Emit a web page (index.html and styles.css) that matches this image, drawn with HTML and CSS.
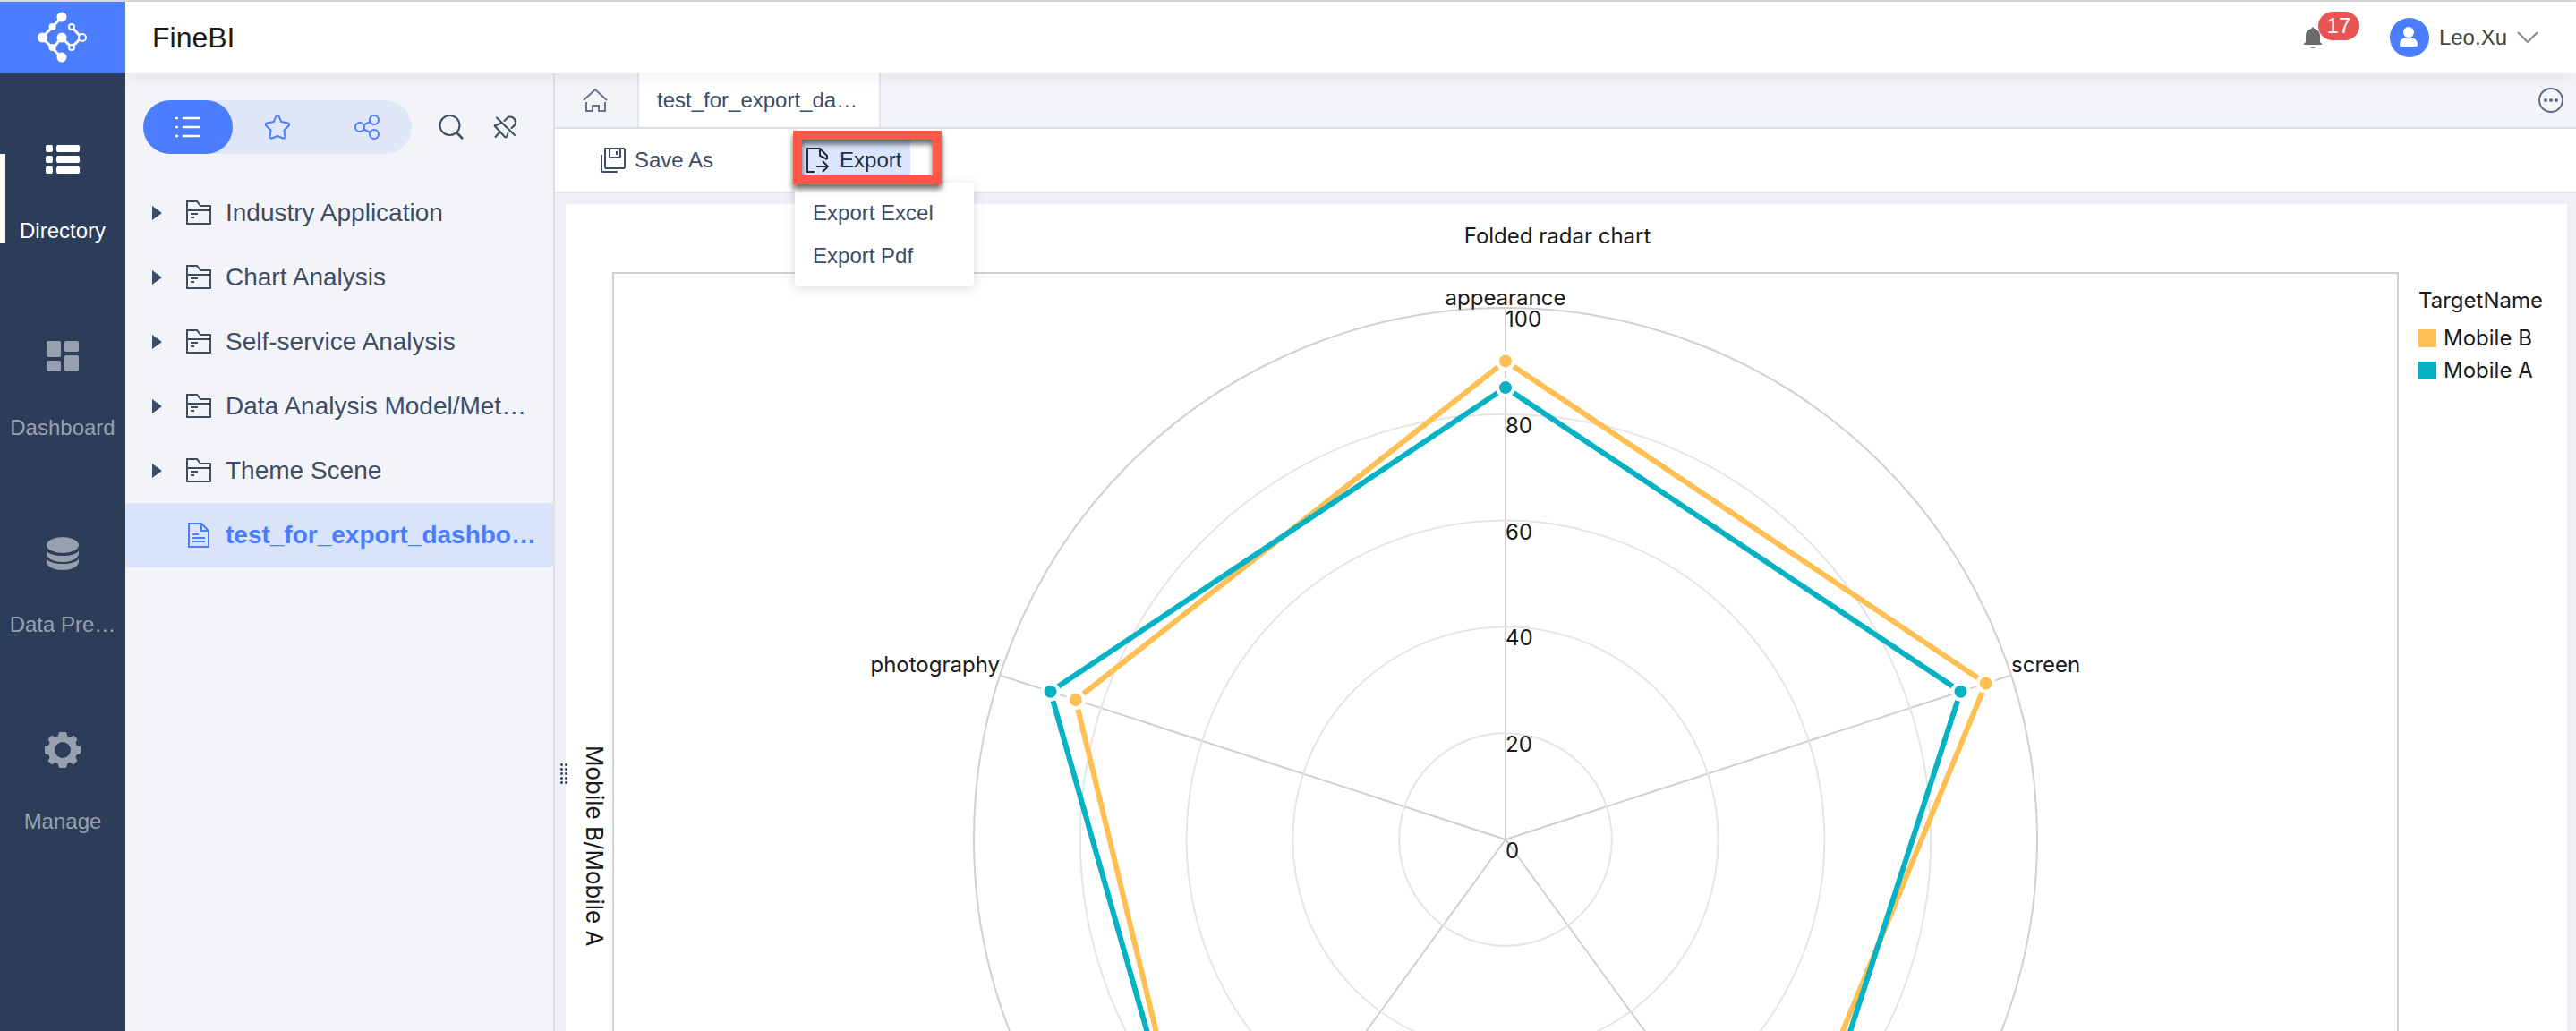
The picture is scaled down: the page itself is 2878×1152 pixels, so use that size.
FILE: index.html
```html
<!DOCTYPE html>
<html lang="en">
<head>
    <meta charset="UTF-8">
    <meta name="viewport" content="width=device-width, initial-scale=1.0">
    <title>FineBI</title>
    <link rel="stylesheet" href="styles.css">
</head>
<body>
    <div class="app">
        <nav class="sidebar">
            <a class="logo" href="#" aria-label="FineBI home">
                <svg width="56" height="60" viewBox="0 0 56 60">
                    <g fill="none" stroke="#fff" stroke-width="3">
                        <path d="M27 7 17 18 5 30 17 42 27 53M17 42 27 30 38 41 49 30 38 18"/>
                        <g fill="#4a7dff" stroke-width="2">
                            <circle cx="38" cy="18" r="3"/>
                            <circle cx="50" cy="30" r="4"/>
                            <circle cx="38" cy="41" r="3"/>
                        </g>
                    </g>
                    <g fill="#fff">
                        <circle cx="27" cy="7" r="5.5"/>
                        <circle cx="16.500" cy="18" r="4"/>
                        <circle cx="5.500" cy="30" r="5.500"/>
                        <circle cx="27" cy="30" r="5.500"/>
                        <circle cx="16.500" cy="41" r="4"/>
                        <circle cx="27" cy="52" r="5.500"/>
                    </g>
                </svg>
            </a>
            <div class="nav-list">
                <a class="nav-item active" href="#">
                    <svg width="40" height="40" viewBox="0 0 40 40" fill="currentColor">
                        <rect x="1" y="4" width="8" height="8" rx="2"/><rect x="13" y="4" width="26" height="8" rx="2"/>
                        <rect x="1" y="16" width="8" height="8" rx="2"/><rect x="13" y="16" width="26" height="8" rx="2"/>
                        <rect x="1" y="28" width="8" height="8" rx="2"/><rect x="13" y="28" width="26" height="8" rx="2"/>
                    </svg>
                    <span>Directory</span>
                </a>
                <a class="nav-item" href="#">
                    <svg width="40" height="40" viewBox="0 0 40 40" fill="currentColor">
                        <rect x="2" y="3" width="16" height="18" rx="2"/><rect x="22" y="3" width="16" height="12" rx="2"/>
                        <rect x="2" y="25" width="16" height="12" rx="2"/><rect x="22" y="19" width="16" height="18" rx="2"/>
                    </svg>
                    <span>Dashboard</span>
                </a>
                <a class="nav-item" href="#">
                    <svg width="40" height="40" viewBox="0 0 40 40" fill="currentColor">
                        <ellipse cx="20" cy="11" rx="18" ry="9"/>
                        <path d="M2 17c3 8 33 8 36 0v4c-2 12-34 12-36 0z"/>
                        <path d="M2 26c3 8 33 8 36 0v4c-2 12-34 12-36 0z"/>
                    </svg>
                    <span>Data Pre…</span>
                </a>
                <a class="nav-item" href="#">
                    <svg width="40" height="40" viewBox="-20 -20 40 40" fill="currentColor">
                        <path fill-rule="evenodd" d="M-4-20H4L5.500-15 8.500-13.800 12-16.500 16.500-12 14.500-8.500 15.500-5.500 20-4V4L15.500 5.500 14.500 8.500 16.500 12 12 16.500 8.500 13.800 5.500 15 4 20H-4L-5.500 15-8.500 13.800-12 16.500-16.500 12-14.500 8.500-15.500 5.500-20 4V-4L-15.500-5.500-14.500-8.500-16.500-12-12-16.500-8.500-13.800-5.500-15zM9 0A9 9 0 1 0-9 0 9 9 0 1 0 9 0z"/>
                    </svg>
                    <span>Manage</span>
                </a>
            </div>
        </nav>

        <div class="page">
            <header class="header">
                <h1>FineBI</h1>
                <div class="user-area">
                    <button class="icon-button bell" aria-label="Messages">
                        <svg width="20" height="26" viewBox="0 0 20 26" fill="#6b6b6b">
                            <path d="M8.500 3a1.500 1.500 0 0 1 3 0c4 1 6.500 4 6.500 8v7l2 2v1H0v-1l2-2v-7c0-4 2.500-7 6.500-8zM6.500 23h7c-1 2.500-6 2.500-7 0z"/>
                        </svg>
                        <span class="badge">17</span>
                    </button>
                    <button class="user">
                        <svg width="44" height="44" viewBox="0 0 44 44">
                            <circle cx="22" cy="22" r="22" fill="#4a7dff"/>
                            <circle cx="21" cy="16" r="6" fill="#fff"/>
                            <path fill="#fff" d="M11 30c0-5 3-7.500 6.500-7.500 2 1 5 1 7 0C28 22.500 31 25 31 30c0 1-1 2-2 2H13c-1 0-2-1-2-2z"/>
                        </svg>
                        <span>Leo.Xu</span>
                        <svg width="24" height="14" viewBox="0 0 24 14" fill="none" stroke="#888" stroke-width="2"><path d="M1 1 12 12 23 1"/></svg>
                    </button>
                </div>
            </header>

            <div class="workspace">
                <aside class="panel">
                    <div class="panel-tools">
                        <div class="view-switch">
                            <button class="active" aria-label="Directory">
                                <svg width="30" height="28" viewBox="0 0 30 28" fill="none" stroke="currentColor" stroke-width="2.500" stroke-linecap="round"><path d="M2 4h1M10 4h18M2 14h1M10 14h18M2 24h1M10 24h18"/></svg>
                            </button>
                            <button aria-label="Favorites">
                                <svg width="30" height="28" viewBox="0 0 30 28" fill="none" stroke="currentColor" stroke-width="2" stroke-linejoin="round"><path d="M13.500 1.800q1.500-2 3 0L19.300 8 27 9.500q2 1 .7 2.800L22.500 17.500 23.500 25q-.3 2-2.500 1.500L15 24 9 26.500Q7 27 6.500 25l1-7.500L2.300 12.300Q1 10.500 3 9.500L10.700 8z"/></svg>
                            </button>
                            <button aria-label="Shared">
                                <svg width="30" height="30" viewBox="0 0 30 30" fill="none" stroke="currentColor" stroke-width="2"><circle cx="7" cy="15" r="5"/><circle cx="23" cy="7" r="5"/><circle cx="23" cy="23" r="5"/><path d="M11.500 12.500 18.500 9M11.500 17.500 18.500 21"/></svg>
                            </button>
                        </div>
                        <button class="icon-button" aria-label="Search">
                            <svg width="28" height="28" viewBox="0 0 28 28" fill="none" stroke="currentColor" stroke-width="2"><circle cx="12.500" cy="12" r="11"/><path d="M20 20 27 27" stroke-width="2.500"/></svg>
                        </button>
                        <button class="icon-button" aria-label="Unpin">
                            <svg width="30" height="28" viewBox="0 0 30 28" fill="none" stroke="currentColor" stroke-width="2" stroke-linecap="round" stroke-linejoin="round"><path d="M7 3.500 27 23M15.500 7 19 3.500c4-3 9 1 9 5.500 0 3-2 4-4.500 6M11 10 4.500 12.500 16 25q1.500 1 2.500-1l1-3.500M11 19 5.500 25"/></svg>
                        </button>
                    </div>
                    <ul class="tree">
                        <li><a href="#"><i class="arrow"></i><svg class="node-icon" viewBox="0 0 28 28"><path d="M1 26V1h11l4 5h11v20zM1 11h26M5 15h8M5 19h4"/></svg><span>Industry Application</span></a></li>
                        <li><a href="#"><i class="arrow"></i><svg class="node-icon" viewBox="0 0 28 28"><path d="M1 26V1h11l4 5h11v20zM1 11h26M5 15h8M5 19h4"/></svg><span>Chart Analysis</span></a></li>
                        <li><a href="#"><i class="arrow"></i><svg class="node-icon" viewBox="0 0 28 28"><path d="M1 26V1h11l4 5h11v20zM1 11h26M5 15h8M5 19h4"/></svg><span>Self-service Analysis</span></a></li>
                        <li><a href="#"><i class="arrow"></i><svg class="node-icon" viewBox="0 0 28 28"><path d="M1 26V1h11l4 5h11v20zM1 11h26M5 15h8M5 19h4"/></svg><span>Data Analysis Model/Met…</span></a></li>
                        <li><a href="#"><i class="arrow"></i><svg class="node-icon" viewBox="0 0 28 28"><path d="M1 26V1h11l4 5h11v20zM1 11h26M5 15h8M5 19h4"/></svg><span>Theme Scene</span></a></li>
                        <li><a class="selected" href="#"><i class="arrow hidden"></i><svg class="node-icon" viewBox="0 0 28 28"><path d="M3 1h14l8 8v18H3zM17 1v8h8M7 13h7M7 17h14M7 21h14"/></svg><span>test_for_export_dashbo…</span></a></li>
                    </ul>
                    <div class="drag-handle"></div>
                </aside>

                <main class="main">
                    <div class="tabs">
                        <button class="tab home" aria-label="Home">
                            <svg width="28" height="28" viewBox="0 0 28 28" fill="none" stroke="#66758c" stroke-width="2"><path d="M1 14 14 2 27 14M4 16v10h7v-6h7v6h7V16"/></svg>
                        </button>
                        <button class="tab current">test_for_export_da…</button>
                        <button class="icon-button more" aria-label="More">
                            <svg width="28" height="28" viewBox="0 0 28 28"><circle cx="14" cy="14" r="13" fill="none" stroke="#5b6c87" stroke-width="2"/><g fill="#5b6c87"><circle cx="8" cy="14" r="2"/><circle cx="14" cy="14" r="2"/><circle cx="20" cy="14" r="2"/></g></svg>
                        </button>
                    </div>

                    <div class="toolbar">
                        <button class="tool">
                            <svg width="28" height="28" viewBox="0 0 28 28" fill="none" stroke="currentColor" stroke-width="2"><path d="M5 1h21l1 1v20l-1 1H6l-1-1zM10 1v9q0 1 1 1h10q1 0 1-1V1M18 4v4M1 8v17q0 2 2 2h16"/></svg>
                            <span>Save As</span>
                        </button>
                        <div class="export">
                            <button class="tool open">
                                <svg width="28" height="28" viewBox="0 0 28 28" fill="none" stroke="currentColor" stroke-width="2"><path d="M10 27H2V1h14l8 8v4M16 1v8l8 4M12 21h13M19 15l6 6-6 6"/></svg>
                                <span>Export</span>
                            </button>
                            <div class="highlight"></div>
                            <div class="menu">
                                <button>Export Excel</button>
                                <button>Export Pdf</button>
                            </div>
                        </div>
                    </div>

                    <div class="content">
                        <section class="card">
                            <h2>Folded radar chart</h2>
                            <div class="chart">
                                <div class="axis-title">Mobile B/Mobile A</div>
                                <div class="plot">
                                    <svg viewBox="-632 -632 1264 1264" id="radar"></svg>
                                </div>
                                <div class="legend">
                                    <div class="legend-title">TargetName</div>
                                    <div class="legend-item"><i class="swatch mobile-b"></i>Mobile B</div>
                                    <div class="legend-item"><i class="swatch mobile-a"></i>Mobile A</div>
                                </div>
                            </div>
                        </section>
                    </div>
                </main>
            </div>
        </div>
    </div>
    <script src="radar.js"></script>
</body>
</html>
```
FILE: radar.js
```js
const svg = document.getElementById('radar');
const radius = 594;
const axes = 5;
const series = [
    { name: 'mobile-b', values: [90, 95, 85, 95, 85] },
    { name: 'mobile-a', values: [85, 90, 90, 95, 90] }
];

function add(tag, attrs, text) {
    const el = document.createElementNS('http://www.w3.org/2000/svg', tag);
    for (const key in attrs) {
        el.setAttribute(key, attrs[key]);
    }
    if (text !== undefined) {
        el.textContent = text;
    }
    svg.appendChild(el);
}

// Axis 0 points up, the rest follow clockwise
function point(axis, value) {
    const angle = axis * 2 * Math.PI / axes;
    const r = radius * value / 100;
    return [r * Math.sin(angle), -r * Math.cos(angle)];
}

for (let i = 0; i < axes; i++) {
    const [x, y] = point(i, 100);
    add('line', { x1: 0, y1: 0, x2: x, y2: y, class: 'axis' });
}

for (let v = 20; v <= 100; v += 20) {
    add('circle', { r: radius * v / 100, class: v === 100 ? 'ring outer' : 'ring' });
}

series.forEach(s => {
    const points = s.values.map((v, i) => point(i, v));
    add('polygon', { points: points.join(' '), class: 'line ' + s.name });
    points.forEach(([x, y]) => add('circle', { cx: x, cy: y, r: 9, class: 'dot ' + s.name }));
});

for (let v = 0; v <= 100; v += 20) {
    add('text', { x: 0, y: 21 - radius * v / 100 }, v);
}

add('text', { x: 0, y: -597, 'text-anchor': 'middle' }, 'appearance');
add('text', { x: 565, y: -187 }, 'screen');
add('text', { x: -565, y: -187, 'text-anchor': 'end' }, 'photography');
```
FILE: styles.css
```css
* {
    box-sizing: border-box;
}

body {
    margin: 0;
    height: 100vh;
    overflow: hidden;
    font-family: "Liberation Sans", Arial, sans-serif;
    font-size: 24px;
    line-height: 28px;
    color: #3d4d66;
}

a {
    color: inherit;
    text-decoration: none;
}

button {
    margin: 0;
    padding: 0;
    border: none;
    background: none;
    font: inherit;
    color: inherit;
    cursor: pointer;
}

svg {
    display: block;
    flex: none;
}

.app {
    display: flex;
    height: 100vh;
    border-top: 2px solid #d9dae1;
}

.sidebar {
    flex: none;
    width: 140px;
    background: #2c3d59;
    position: relative;
    z-index: 3;
}

.logo {
    display: flex;
    align-items: center;
    justify-content: center;
    height: 80px;
    background: #4a7dff;
}

.nav-list {
    padding-top: 30px;
}

.nav-item {
    display: flex;
    flex-direction: column;
    align-items: center;
    gap: 46px;
    height: 220px;
    padding-top: 46px;
    color: #97a0af;
    white-space: nowrap;
}

.nav-item.active {
    color: #fff;
    background: linear-gradient(#fff, #fff) 0 60px / 6px 100px no-repeat;
}

.page {
    flex: 1;
    min-width: 0;
    display: flex;
    flex-direction: column;
}

.header {
    flex: none;
    display: flex;
    align-items: center;
    justify-content: space-between;
    height: 80px;
    padding: 0 42px 0 30px;
    background: #fff;
    box-shadow: 0 2px 20px rgba(0, 0, 0, 0.08);
    position: relative;
    z-index: 2;
}

h1 {
    margin: 0;
    font-size: 32px;
    font-weight: normal;
    color: #1a1a1a;
}

.user-area {
    display: flex;
    align-items: center;
    gap: 76px;
}

.bell {
    position: relative;
}

.badge {
    position: absolute;
    left: 16px;
    bottom: 10px;
    width: 46px;
    height: 32px;
    border-radius: 16px;
    background: #e85454;
    color: #fff;
    line-height: 32px;
}

.user {
    display: flex;
    align-items: center;
    gap: 11px;
    color: #444;
}

.workspace {
    flex: 1;
    min-height: 0;
    display: flex;
}

.panel {
    flex: none;
    width: 480px;
    padding-top: 30px;
    background: #f3f4f8;
    border-right: 2px solid #dde0e7;
    position: relative;
}

.panel-tools {
    display: flex;
    align-items: center;
    gap: 30px;
    padding-left: 20px;
    margin-bottom: 30px;
}

.view-switch {
    display: flex;
    border-radius: 30px;
    background: #e0e7f8;
    color: #4a7dff;
}

.view-switch button {
    display: flex;
    align-items: center;
    justify-content: center;
    width: 100px;
    height: 60px;
    border-radius: 30px;
}

.view-switch .active {
    background: #4a7dff;
    color: #fff;
}

.tree {
    margin: 0;
    padding: 0;
    list-style: none;
    font-size: 28px;
}

.tree a {
    display: flex;
    align-items: center;
    height: 72px;
    padding-left: 30px;
    white-space: nowrap;
}

.tree .selected {
    border-radius: 4px;
    background: #d9e3f9;
    color: #4a7dff;
    font-weight: bold;
}

.arrow {
    border: 8px solid transparent;
    border-left: 11px solid #3d4d66;
    border-right: 0;
}

.arrow.hidden {
    visibility: hidden;
}

.node-icon {
    width: 28px;
    height: 28px;
    margin: 0 16px 0 27px;
    fill: none;
    stroke: currentColor;
    stroke-width: 2;
}

.drag-handle {
    position: absolute;
    left: 485px;
    top: 770px;
    width: 10px;
    height: 25px;
    background: radial-gradient(circle, #3d5070 1px, transparent 2px) 0 0 / 5px 5px;
    z-index: 1;
}

.main {
    flex: 1;
    min-width: 0;
    display: flex;
    flex-direction: column;
}

.tabs {
    flex: none;
    display: flex;
    align-items: center;
    height: 62px;
    padding-right: 14px;
    background: #f2f4f8;
    border-bottom: 2px solid #dce1e8;
}

.tab {
    display: flex;
    align-items: center;
    height: 60px;
    border-right: 2px solid #e4e7ed;
}

.tab.home {
    padding: 0 33px 0 31px;
}

.tab.current {
    padding: 0 24px 0 20px;
    background: #fff;
}

.more {
    margin-left: auto;
}

.toolbar {
    flex: none;
    display: flex;
    align-items: center;
    gap: 82px;
    height: 72px;
    padding-left: 42px;
    background: #fff;
    border-bottom: 2px solid #e5e8ec;
}

.tool {
    display: flex;
    align-items: center;
    gap: 10px;
    height: 48px;
    padding: 0 9px;
}

.tool.open {
    background: #dae6fd;
    color: #1f2c42;
    padding: 0 10px 0 12px;
}

.export {
    position: relative;
}

.highlight {
    position: absolute;
    left: -2px;
    top: -9px;
    width: 166px;
    height: 60px;
    border: 10px solid #ff584a;
    filter: drop-shadow(0 5px 3px rgba(0, 0, 0, 0.6));
    pointer-events: none;
    z-index: 2;
}

.menu {
    position: absolute;
    left: 0;
    top: 49px;
    display: flex;
    flex-direction: column;
    width: 200px;
    padding: 10px 0;
    border-radius: 4px;
    background: #fff;
    box-shadow: 0 2px 12px rgba(61, 77, 102, 0.2);
    z-index: 1;
}

.menu button {
    height: 48px;
    padding-left: 20px;
    text-align: left;
}

.content {
    flex: 1;
    min-height: 0;
    padding: 12px 10px 0 12px;
    background: #eef0f5;
    overflow: hidden;
}

.card {
    background: #fff;
    font-family: Inter, "Liberation Sans", sans-serif;
    color: #1a1a1a;
}

h2 {
    margin: 0;
    padding-right: 20px;
    height: 76px;
    font-size: 24px;
    font-weight: normal;
    line-height: 72px;
    text-align: center;
}

.chart {
    display: grid;
    grid-template-columns: 52px 1fr 188px;
}

.axis-title {
    padding: 14px 4px 0 0;
    writing-mode: vertical-rl;
    text-align: center;
    font-size: 26px;
    line-height: 32px;
}

.plot {
    border: 2px solid #cfcfcf;
}

.plot svg {
    width: 100%;
    height: 1264px;
    overflow: visible;
}

.plot text {
    font-size: 24px;
    fill: #1a1a1a;
}

.axis {
    stroke: #d0d0d0;
    stroke-width: 2;
}

.ring {
    fill: none;
    stroke: #e5e5e5;
    stroke-width: 2;
}

.ring.outer {
    stroke: #d0d0d0;
}

.line {
    fill: none;
    stroke-width: 6;
}

.line.mobile-b {
    stroke: #ffbf53;
}

.line.mobile-a {
    stroke: #05b2c4;
}

.dot {
    stroke: #fff;
    stroke-width: 4;
}

.swatch.mobile-b {
    background: #ffbf53;
}

.swatch.mobile-a {
    background: #05b2c4;
}

.dot.mobile-b {
    fill: #ffbf53;
}

.dot.mobile-a {
    fill: #05b2c4;
}

.legend {
    padding: 14px 0 0 22px;
    line-height: 36px;
}

.legend-title {
    margin-bottom: 6px;
}

.legend-item {
    display: flex;
    align-items: center;
    gap: 8px;
}

.swatch {
    width: 20px;
    height: 20px;
}
```
